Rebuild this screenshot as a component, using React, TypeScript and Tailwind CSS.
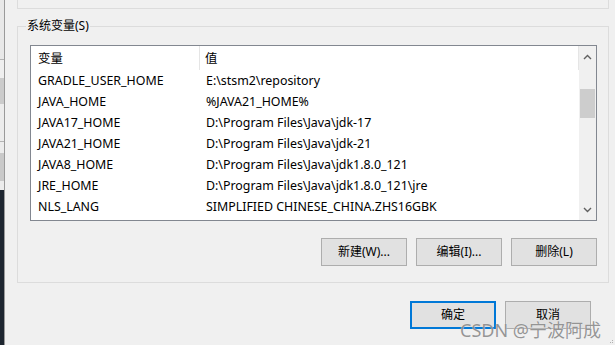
import React from "react";

const rows: [string, string][] = [
  ["GRADLE_USER_HOME", "E:\\stsm2\\repository"],
  ["JAVA_HOME", "%JAVA21_HOME%"],
  ["JAVA17_HOME", "D:\\Program Files\\Java\\jdk-17"],
  ["JAVA21_HOME", "D:\\Program Files\\Java\\jdk-21"],
  ["JAVA8_HOME", "D:\\Program Files\\Java\\jdk1.8.0_121"],
  ["JRE_HOME", "D:\\Program Files\\Java\\jdk1.8.0_121\\jre"],
  ["NLS_LANG", "SIMPLIFIED CHINESE_CHINA.ZHS16GBK"],
];

const font = {
  fontFamily: '"Noto Sans", "Noto Sans CJK SC", sans-serif',
};

function WinButton({
  label,
  primary,
}: {
  label: string;
  primary?: boolean;
}) {
  return (
    <button
      className={
        primary
          ? "flex h-[28px] w-[86px] items-center justify-center border-2 border-[#0078d7] bg-[#e1e1e1] text-[12px] text-black"
          : "flex h-[28px] w-[86px] items-center justify-center border border-[#adadad] bg-[#e1e1e1] text-[12px] text-black"
      }
    >
      {label}
    </button>
  );
}

function LeftStrip() {
  // slice of the window behind the dialog
  return (
    <div className="flex w-[5px] flex-col border-r border-[#9a9a9a]">
      <div className="h-[59px] bg-[#e8e8e8]" />
      <div className="h-px bg-[#b4b4b4]" />
      <div className="h-[18px] bg-[#efefef]" />
      <div className="h-[26px] bg-[#cbcbcb]" />
      <div className="h-[37px] bg-[#ececec]" />
      <div className="h-px bg-[#b4b4b4]" />
      <div className="h-[11px] bg-[#ececec]" />
      <div className="h-[28px] bg-[#c9c9c9]" />
      <div className="h-[9px] bg-[#ececec]" />
      <div className="flex-1 bg-[#1e2630]" />
    </div>
  );
}

function VarList() {
  return (
    <div className="flex h-[176px] w-[567px] border border-[#828790] bg-white text-[12.4px]">
      <div className="flex min-w-0 flex-1 flex-col">
        <div className="flex h-[24px] items-center">
          <div className="flex h-full w-[169px] items-center border-r border-[#e5e5e5] pl-[7px] pt-[2px]">
            变量
          </div>
          <div className="flex h-full flex-1 items-center border-r border-[#e5e5e5] pl-[5px] pt-[2px]">
            值
          </div>
        </div>
        {rows.map(([name, value]) => (
          <div key={name} className="flex h-[21px] items-center pt-[1px]">
            <div className="w-[169px] truncate pl-[7px]">{name}</div>
            <div className="flex-1 truncate pl-[6px]">{value}</div>
          </div>
        ))}
      </div>
      <div className="flex w-[17px] flex-col items-center bg-[#f0f0f0]">
        <svg width="9" height="6" viewBox="0 0 9 6" className="mt-[8px]">
          <path d="M1 5 L4.5 1.5 L8 5" stroke="#606060" strokeWidth="1.4" fill="none" />
        </svg>
        <div className="mt-[29px] h-[29px] w-[15px] bg-[#cdcdcd]" />
        <div className="flex-1" />
        <svg width="9" height="6" viewBox="0 0 9 6" className="mb-[7px]">
          <path d="M1 1 L4.5 4.5 L8 1" stroke="#606060" strokeWidth="1.4" fill="none" />
        </svg>
      </div>
    </div>
  );
}

export default function App() {
  return (
    <div
      className="relative flex h-[345px] w-[615px] overflow-hidden bg-[#f0f0f0] text-[12px] text-black"
      style={font}
    >
      <LeftStrip />
      <div className="flex flex-1 flex-col">
        <div className="ml-[12px] mr-[6px] h-[9px] border-x border-b border-[#dcdcdc]" />

        <div className="relative ml-[12px] mr-[6px] mt-[17px] flex flex-col items-start border border-[#dcdcdc] pb-[16px] pl-[12px] pr-[11px] pt-[18px]">
          <span className="absolute left-[8px] top-[-10px] bg-[#f0f0f0] px-[1px] leading-[18px]">
            系统变量(S)
          </span>
          <VarList />
          <div className="mt-[17px] flex gap-[9px] self-end">
            <WinButton label="新建(W)..." />
            <WinButton label="编辑(I)..." />
            <WinButton label="删除(L)" />
          </div>
        </div>

        <div className="mr-[24px] mt-[18px] flex justify-end gap-[9px]">
          <WinButton label="确定" primary />
          <WinButton label="取消" />
        </div>
      </div>

      <span
        className="absolute bottom-[4px] right-[14px] text-[18px] leading-[22px] text-[#8c8c8c] opacity-90"
        style={{ textShadow: "0 0 1px #ffffff" }}
      >
        CSDN @宁波阿成
      </span>
      <div className="absolute bottom-[2px] right-[2px] grid grid-cols-2 gap-[1px]">
        <span className="h-[1px] w-[1px]" />
        <span className="h-[1px] w-[1px] bg-[#b0b0b0]" />
        <span className="h-[1px] w-[1px] bg-[#b0b0b0]" />
        <span className="h-[1px] w-[1px] bg-[#b0b0b0]" />
      </div>
    </div>
  );
}
